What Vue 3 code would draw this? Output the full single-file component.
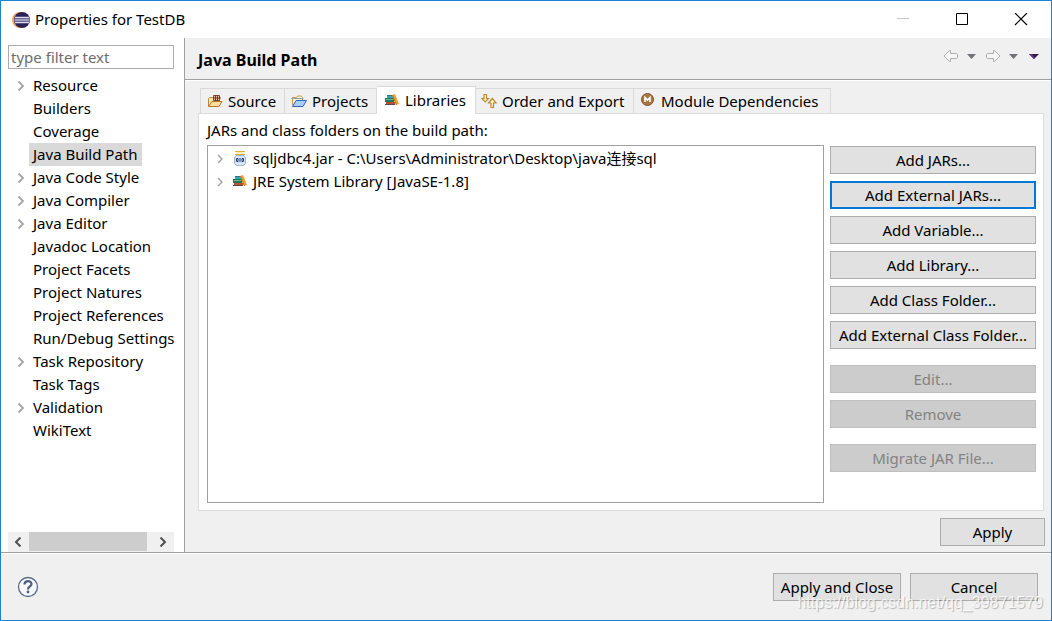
<script setup>
import { ref } from 'vue'

const filter = ref('')
const pages = [
  { label: 'Resource', open: true },
  { label: 'Builders' },
  { label: 'Coverage' },
  { label: 'Java Build Path', selected: true },
  { label: 'Java Code Style', open: true },
  { label: 'Java Compiler', open: true },
  { label: 'Java Editor', open: true },
  { label: 'Javadoc Location' },
  { label: 'Project Facets' },
  { label: 'Project Natures' },
  { label: 'Project References' },
  { label: 'Run/Debug Settings' },
  { label: 'Task Repository', open: true },
  { label: 'Task Tags' },
  { label: 'Validation', open: true },
  { label: 'WikiText' }
]
const tabs = [
  { id: 'source', label: 'Source' },
  { id: 'projects', label: 'Projects' },
  { id: 'libraries', label: 'Libraries' },
  { id: 'order', label: 'Order and Export' },
  { id: 'modules', label: 'Module Dependencies' }
]
const active = ref('libraries')
const groups = [
  {
    disabled: false,
    items: ['Add JARs...', 'Add External JARs...', 'Add Variable...', 'Add Library...', 'Add Class Folder...', 'Add External Class Folder...']
  },
  { disabled: true, items: ['Edit...', 'Remove'] },
  { disabled: true, items: ['Migrate JAR File...'] }
]
</script>

<template>
  <div class="window">
    <svg class="defs" width="0" height="0" aria-hidden="true">
      <symbol id="books" viewBox="0 0 16 16">
        <path d="M3 2h7v3H3z" fill="#35a3b5" />
        <path d="M3 2h7v1H3z" fill="#1d7f93" />
        <path d="M1 5h9v4H1z" fill="#25795a" />
        <path d="M2 6h7v1H2z" fill="#5fb98a" />
        <path d="M2 9h9v3H2z" fill="#b5532f" />
        <path d="M1 11h10v1H1z" fill="#5c4a4a" />
        <path d="M8 2l3-1 4 10-3 1z" fill="#f2a030" />
        <path d="M8 2l1 0 4 10-1 0z" fill="#c9701a" />
      </symbol>
    </svg>

    <header class="titlebar">
      <svg class="logo" width="18" height="18" viewBox="0 0 18 18" aria-hidden="true">
        <circle cx="8" cy="9" r="8" fill="#f5a55a" />
        <circle cx="10" cy="9" r="8" fill="#2c2255" />
        <path d="M3 6.500h14M2.500 9h15M3 11.500h14" stroke="#dcdcf0" stroke-width="1.500" />
        <path d="M3 7.750h14M3 10.250h14" stroke="#77749f" stroke-width="1" />
      </svg>
      <span class="title">Properties for TestDB</span>
      <div class="controls">
        <button aria-label="Minimize" disabled>
          <svg width="14" height="14" viewBox="0 0 14 14"><path d="M1 5.500h12" stroke="#c8c8c8" /></svg>
        </button>
        <button aria-label="Maximize">
          <svg width="14" height="14" viewBox="0 0 14 14"><path d="M1.500 .5h11v11h-11z" fill="none" stroke="#000" /></svg>
        </button>
        <button aria-label="Close">
          <svg width="14" height="14" viewBox="0 0 14 14"><path d="M1 0l12 12M13 0L1 12" stroke="#000" stroke-width="1.200" /></svg>
        </button>
      </div>
    </header>

    <div class="body">
      <aside class="sidebar">
        <input v-model="filter" class="filter" type="text" placeholder="type filter text" aria-label="type filter text" />
        <ul class="tree">
          <li v-for="p in pages" :key="p.label">
            <svg class="chev" width="8" height="12" viewBox="0 0 8 12" aria-hidden="true">
              <path v-if="p.open" d="M1.500 1.500L6 6l-4.500 4.500" fill="none" stroke="#a6a6a6" stroke-width="1.800" />
            </svg>
            <span class="node" :class="{ selected: p.selected }">{{ p.label }}</span>
          </li>
        </ul>
        <div class="scroll">
          <button aria-label="Scroll left">
            <svg width="8" height="10" viewBox="0 0 8 10"><path d="M6.500 .5L2 5l4.500 4.500" fill="none" stroke="#505050" stroke-width="2" /></svg>
          </button>
          <div class="track"><div class="thumb"></div></div>
          <button aria-label="Scroll right">
            <svg width="8" height="10" viewBox="0 0 8 10"><path d="M1.500 .5L6 5 1.500 9.500" fill="none" stroke="#505050" stroke-width="2" /></svg>
          </button>
        </div>
      </aside>

      <main class="main">
        <div class="heading">
          <h1>Java Build Path</h1>
          <div class="nav">
            <button aria-label="Back">
              <svg width="16" height="14" viewBox="0 0 16 14"><path d="M1 7L6.500 1.500h1v3h6l1 1v3l-1 1h-6v3h-1z" fill="#f6f6f6" stroke="#adadad" stroke-linejoin="round" /></svg>
            </button>
            <button aria-label="Back history">
              <svg width="10" height="14" viewBox="0 0 10 14"><path d="M0 5h9L4.500 10z" fill="#737377" /></svg>
            </button>
            <button aria-label="Forward">
              <svg width="16" height="14" viewBox="0 0 16 14"><path d="M15 7L9.500 1.500h-1v3h-6l-1 1v3l1 1h6v3h1z" fill="#f6f6f6" stroke="#adadad" stroke-linejoin="round" /></svg>
            </button>
            <button aria-label="Forward history">
              <svg width="10" height="14" viewBox="0 0 10 14"><path d="M0 5h9L4.500 10z" fill="#737377" /></svg>
            </button>
            <button class="menu" aria-label="Menu">
              <svg width="10" height="14" viewBox="0 0 10 14"><path d="M0 5h10L5 10z" fill="#30203f" /><path d="M0 5h3l3 4-1 1z" fill="#5a2f9a" /></svg>
            </button>
          </div>
        </div>

        <div class="content">
          <div class="tabs" role="tablist">
            <button v-for="t in tabs" :key="t.id" role="tab" class="tab" :class="[t.id, { active: active === t.id }]" :aria-selected="active === t.id" @click="active = t.id">
              <svg v-if="t.id === 'source'" width="16" height="16" viewBox="0 0 16 16" aria-hidden="true">
                <path d="M1.500 13V5.500l1-1h3l1 1H12v8z" fill="#fbe6a8" stroke="#c08a3c" />
                <path d="M1.500 13.500L5 8.500h10l-3 5z" fill="#fbdf9c" stroke="#b9762a" />
                <path d="M6.500 2.500h6v5h-6z" fill="#e9c7a0" stroke="#7a4a30" />
                <path d="M8.500 2v6M10.500 2v6M6 5h8" stroke="#6b3d26" />
              </svg>
              <svg v-else-if="t.id === 'projects'" width="16" height="16" viewBox="0 0 16 16" aria-hidden="true">
                <path d="M1.500 12V4.500h4l1-1.500h4l1 1.500v7z" fill="#fff3c8" stroke="#c9a052" />
                <path d="M.5 5.500h12" stroke="#8c9cc4" />
                <path d="M1.500 13.500L5 7.500h10.500l-3.500 6z" fill="#a9cdf5" stroke="#3c62b5" />
              </svg>
              <svg v-else-if="t.id === 'libraries'" width="16" height="16" aria-hidden="true"><use href="#books" /></svg>
              <svg v-else-if="t.id === 'order'" width="16" height="16" viewBox="0 0 16 16" aria-hidden="true">
                <path d="M3 1.500h2.500v4h2L4.250 9 .8 5.500H3z" fill="#fff4cd" stroke="#bf8a2e" stroke-width="1.200" />
                <path d="M10 14.500h2.500v-4.500h2.700L11.250 5.500 7.500 10H10z" fill="#fff4cd" stroke="#bf8a2e" stroke-width="1.200" />
              </svg>
              <svg v-else width="16" height="16" viewBox="0 0 16 16" aria-hidden="true">
                <circle cx="7.500" cy="6.500" r="6" fill="#a87842" stroke="#7c5428" />
                <path d="M5 9V4.500L7.500 7 10 4.500V9" fill="none" stroke="#fff" stroke-width="1.600" />
              </svg>
              <span>{{ t.label }}</span>
            </button>
          </div>

          <section class="panel">
            <div class="label">JARs and class folders on the build path:</div>
            <div class="cols">
              <ul class="entries">
                <li>
                  <svg class="chev" width="6" height="10" viewBox="0 0 6 10" aria-hidden="true"><path d="M1 1l4 4-4 4" fill="none" stroke="#a6a6a6" stroke-width="1.500" /></svg>
                  <svg width="16" height="16" viewBox="0 0 16 16" aria-hidden="true">
                    <path d="M3 0h10v1H3zM3 3h10v1H3z" fill="#dfae3c" />
                    <path d="M4 1h8v2H4z" fill="#fff0b8" />
                    <path d="M4 4.500h8l1.500 2v6l-2 2h-7l-2-2v-6z" fill="#d5e4f6" stroke="#9db4d4" />
                    <path d="M4.500 7.500h1.500v3H4.500zM8 7v4M10 7.500h1.500v3H10z" fill="none" stroke="#223f78" />
                  </svg>
                  <span>sqljdbc4.jar - C:\Users\Administrator\Desktop\java连接sql</span>
                </li>
                <li>
                  <svg class="chev" width="6" height="10" viewBox="0 0 6 10" aria-hidden="true"><path d="M1 1l4 4-4 4" fill="none" stroke="#a6a6a6" stroke-width="1.500" /></svg>
                  <svg width="16" height="16" aria-hidden="true"><use href="#books" /></svg>
                  <span>JRE System Library [JavaSE-1.8]</span>
                </li>
              </ul>
              <div class="actions">
                <div v-for="(g, i) in groups" :key="i" class="group">
                  <button v-for="b in g.items" :key="b" class="btn" :class="{ focus: b === 'Add External JARs...' }" :disabled="g.disabled">{{ b }}</button>
                </div>
              </div>
            </div>
          </section>

          <div class="applyrow"><button class="btn apply">Apply</button></div>
        </div>
      </main>
    </div>

    <footer class="footer">
      <button class="help" aria-label="Help">
        <svg width="22" height="22" viewBox="0 0 22 22">
          <circle cx="11" cy="11" r="9.500" fill="#f6f8fb" stroke="#5a6b8a" stroke-width="1.300" />
          <path d="M7.500 8.500c0-4.500 7-4.500 7-.5 0 2.500-3.500 2.500-3.500 5.500" fill="none" stroke="#4d5f82" stroke-width="2.200" />
          <circle cx="11" cy="16" r="1.400" fill="#4d5f82" />
        </svg>
      </button>
      <div class="buttons">
        <button class="btn">Apply and Close</button>
        <button class="btn">Cancel</button>
      </div>
    </footer>
    <div class="watermark">https://blog.csdn.net/qq_39871579</div>
  </div>
</template>

<style>
body {
  margin: 0;
}
</style>

<style scoped>
.window {
  position: relative;
  box-sizing: border-box;
  min-height: 100vh;
  display: flex;
  flex-direction: column;
  border: 1px solid #1883d7;
  background: #f0f0f0;
  color: #000;
  font: 15px/23px "Noto Sans", "Noto Sans CJK SC", sans-serif;
}
.defs {
  position: absolute;
}
button {
  font: inherit;
  color: inherit;
  padding: 0;
  border: 0;
  background: none;
}
svg {
  display: block;
  flex: none;
}
ul {
  list-style: none;
  margin: 0;
  padding: 0;
}
.titlebar {
  display: flex;
  align-items: center;
  height: 37px;
  padding: 0 1px 0 11px;
  background: #fff;
}
.title {
  margin-left: 5px;
}
.controls {
  display: flex;
  margin-left: auto;
}
.controls button {
  width: 59px;
  display: flex;
  justify-content: center;
}
.body {
  flex: 1;
  display: flex;
}
.sidebar {
  flex: none;
  box-sizing: border-box;
  width: 184px;
  padding: 7px 10px 0 7px;
  display: flex;
  flex-direction: column;
  background: #fff;
  border-right: 1px solid #a0a0a0;
}
.filter {
  box-sizing: border-box;
  width: 100%;
  height: 24px;
  padding: 0 2px;
  border: 1px solid #ababb2;
  border-radius: 0;
  background: #fff;
  font: inherit;
}
.filter::placeholder {
  color: #6d6d6d;
  opacity: 1;
}
.tree {
  flex: 1;
  padding-top: 5px;
  overflow: hidden;
}
.tree li {
  display: flex;
  align-items: center;
  height: 23px;
  padding-left: 9px;
  white-space: nowrap;
}
.node {
  margin-left: 4px;
  padding: 0 4px;
}
.selected {
  background: #d9d9d9;
}
.scroll {
  display: flex;
  height: 20px;
  background: #f0f0f0;
}
.scroll button {
  width: 21px;
  padding-right: 2px;
  display: flex;
  align-items: center;
  justify-content: center;
}
.track {
  flex: 1;
}
.thumb {
  width: 95%;
  height: 19px;
  background: #cdcdcd;
}
.main {
  flex: 1;
  min-width: 0;
  display: flex;
  flex-direction: column;
}
.heading {
  display: flex;
  align-items: center;
  justify-content: space-between;
  height: 41px;
  padding: 0 12px 0 13px;
  border-bottom: 1px solid #a0a0a0;
  box-shadow: 0 1px #fff;
}
h1 {
  margin: 0;
  padding-top: 3px;
  font-size: 16px;
  font-weight: 700;
}
.nav {
  display: flex;
  gap: 8px;
  padding-bottom: 5px;
}
.menu {
  margin-left: 2px;
}
.content {
  flex: 1;
  display: flex;
  flex-direction: column;
  padding: 6px 7px 6px 13px;
}
.tabs {
  display: flex;
  align-items: flex-end;
  padding-left: 2px;
}
.tab {
  box-sizing: border-box;
  display: flex;
  align-items: center;
  gap: 5px;
  height: 25px;
  padding: 0 4px 0 6px;
  border: solid #d9d9d9;
  border-width: 1px 1px 0 0;
  white-space: nowrap;
}
.tab:first-child {
  border-left-width: 1px;
}
.tab.active {
  position: relative;
  height: 28px;
  margin-bottom: -1px;
  padding: 0 7px;
  background: #fff;
}
.source {
  min-width: 85px;
}
.projects {
  min-width: 92px;
}
.libraries {
  min-width: 99px;
}
.tab.order {
  min-width: 158px;
  padding-left: 5px;
}
.modules {
  min-width: 197px;
}
.panel {
  flex: 1;
  display: flex;
  flex-direction: column;
  padding: 5px 7px 7px 8px;
  border: 1px solid #dcdcdc;
  background: #fff;
}
.label {
  height: 26px;
}
.cols {
  flex: 1;
  display: flex;
  gap: 6px;
}
.entries {
  flex: 1;
  padding-top: 1px;
  border: 1px solid #a0a0a5;
}
.entries li {
  display: flex;
  align-items: center;
  height: 23px;
  padding-left: 9px;
}
.entries li svg + svg {
  margin: 0 5px 0 9px;
}
.actions {
  width: 206px;
  padding-top: 1px;
  display: flex;
  flex-direction: column;
  gap: 16px;
}
.group {
  display: flex;
  flex-direction: column;
  gap: 7px;
}
.btn {
  box-sizing: border-box;
  height: 28px;
  border: 1px solid #adadad;
  background: #e1e1e1;
  line-height: 26px;
  white-space: nowrap;
}
.btn.focus {
  border: 2px solid #0078d7;
  line-height: 24px;
}
.btn:disabled {
  border-color: #bfbfbf;
  background: #ccc;
  color: #838383;
}
.applyrow {
  display: flex;
  justify-content: flex-end;
  padding-top: 7px;
}
.apply {
  width: 105px;
}
.applyrow .btn {
  margin-right: -1px;
}
.footer {
  display: flex;
  align-items: center;
  justify-content: space-between;
  height: 67px;
  padding: 0 13px 0 16px;
  border-top: 1px solid #a0a0a0;
  box-shadow: inset 0 1px #fff;
}
.buttons {
  display: flex;
  gap: 9px;
}
.buttons .btn {
  width: 128px;
}
.watermark {
  position: absolute;
  right: 8px;
  bottom: 7px;
  color: rgba(255, 255, 255, 0.8);
  text-shadow: 1px 1px 1px rgba(0, 0, 0, 0.25);
  font: 16px/20px "Liberation Sans", Arial, sans-serif;
  pointer-events: none;
}
</style>
